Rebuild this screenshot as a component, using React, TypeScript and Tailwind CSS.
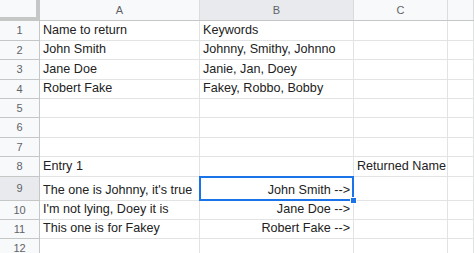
const colWidths = ["w-[40px]", "w-[160px]", "w-[154px]", "w-[94px]", "flex-1"];
const rowHeights = [
  "h-[20px]", "h-[19px]", "h-[20px]", "h-[19px]", "h-[19px]", "h-[20px]",
  "h-[19px]", "h-[20px]", "h-[24px]", "h-[19px]", "h-[19px]", "h-[20px]",
];

type Cell = { text?: string; right?: boolean };

const rows: Cell[][] = [
  [{ text: "Name to return" }, { text: "Keywords" }, {}],
  [{ text: "John Smith" }, { text: "Johnny, Smithy, Johnno" }, {}],
  [{ text: "Jane Doe" }, { text: "Janie, Jan, Doey" }, {}],
  [{ text: "Robert Fake" }, { text: "Fakey, Robbo, Bobby" }, {}],
  [{}, {}, {}],
  [{}, {}, {}],
  [{}, {}, {}],
  [{ text: "Entry 1" }, {}, { text: "Returned Name" }],
  [{ text: "The one is Johnny, it's true" }, { text: "John Smith -->", right: true }, {}],
  [{ text: "I'm not lying, Doey it is" }, { text: "Jane Doe -->", right: true }, {}],
  [{ text: "This one is for Fakey" }, { text: "Robert Fake -->", right: true }, {}],
  [{}, {}, {}],
];

export default function App() {
  return (
    <div className="w-[474px] h-[253px] overflow-hidden bg-white font-['Liberation_Sans',Arial,sans-serif] select-none">
      {/* column headers */}
      <div className="flex h-[21px] border-b border-[#c4c7c5]">
        <div className="relative w-[40px] bg-[#f8f9fa]">
          <div className="absolute right-0 top-0 h-full w-[4px] bg-[#c4c7c5]" />
          <div className="absolute bottom-0 left-0 w-full h-[3px] bg-[#c4c7c5]" />
        </div>
        {["A", "B", "C", ""].map((l, i) => (
          <div
            key={i}
            className={`${colWidths[i + 1]} flex items-center justify-center border-r border-[#dadce0] text-[11px] text-[#5f6368] ${
              l === "B" ? "bg-[#e8eaed]" : "bg-[#f8f9fa]"
            }`}
          >
            {l}
          </div>
        ))}
      </div>

      {rows.map((r, ri) => (
        <div key={ri} className={`flex ${rowHeights[ri]}`}>
          <div
            className={`w-[40px] flex items-center justify-center border-r border-b border-[#c4c7c5] text-[11px] text-[#5f6368] ${
              ri === 8 ? "bg-[#e8eaed]" : "bg-[#f8f9fa]"
            }`}
          >
            {ri + 1}
          </div>
          {r.concat([{}]).map((c, ci) => {
            const selected = ri === 8 && ci === 1;
            return (
              <div
                key={ci}
                className={`${colWidths[ci + 1]} relative flex items-end border-r border-b border-[#e2e3e3] px-[3px] pb-[2px] text-[12.6px] leading-[15px] text-[#222] whitespace-nowrap ${
                  c.right ? "justify-end" : ""
                }`}
              >
                {c.text}
                {selected && (
                  <>
                    <div className="absolute -left-[1px] -top-[1px] -right-[1px] -bottom-[1px] border-2 border-[#1a73e8]" />
                    <div className="absolute -right-[4px] -bottom-[4px] w-[7px] h-[7px] bg-[#1a73e8] border border-white z-10" />
                  </>
                )}
              </div>
            );
          })}
        </div>
      ))}
    </div>
  );
}
